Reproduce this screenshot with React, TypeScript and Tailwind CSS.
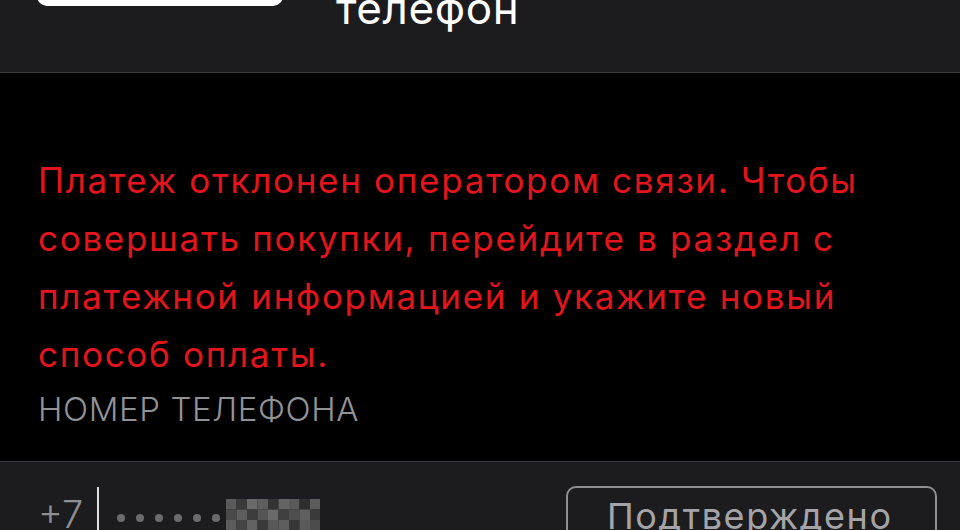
const mosaic = [
  ['#5a5a5a', '#3a3a3a', '#6a6a6a', '#5e5e5e', '#333333', '#646464', '#5a5a5a', '#2e2e2e', '#5c5c5c'],
  ['#4a4a4a', '#5e5e5e', '#3c3c3c', '#555555', '#6a6a6a', '#404040', '#4e4e4e', '#606060', '#3a3a3a'],
  ['#5c5c5c', '#444444', '#626262', '#3a3a3a', '#585858', '#5e5e5e', '#363636', '#5a5a5a', '#4c4c4c'],
];

const Mosaic = () => (
  <svg width="94" height="32" viewBox="0 0 94 32" className="block">
    {mosaic.map((row, r) =>
      row.map((c, i) => <rect key={`${r}-${i}`} x={i * 10.5} y={r * 10.5} width="10.5" height="10.5" fill={c} />)
    )}
  </svg>
);

export default function App() {
  return (
    <div className="w-[960px] h-[530px] overflow-hidden bg-black flex flex-col" style={{ fontFamily: 'Inter, "Liberation Sans", Arial, sans-serif' }}>
      {/* Top bar */}
      <div className="h-[73px] shrink-0 bg-[#1c1c1e] border-b border-[#3a3a3c] relative overflow-hidden">
        <div className="absolute left-[37px] top-[-40px] w-[246px] h-[46px] bg-white rounded-[10px]" />
        <div className="absolute left-[336px] top-[-17px] text-[44px] leading-[50px] tracking-[0.6px] text-white">телефон</div>
      </div>

      {/* Message */}
      <div className="h-[388px] shrink-0 bg-black px-[38px] pt-[78px]">
        <p className="text-[35px] leading-[58px] tracking-[1.7px] text-[#e3151c]">
          Платеж отклонен оператором связи. Чтобы совершать покупки, перейдите в раздел с платежной информацией и укажите новый способ оплаты.
        </p>
        <div className="mt-[6px] text-[33px] leading-[40px] tracking-[0.6px] text-[#929296] font-light">НОМЕР ТЕЛЕФОНА</div>
      </div>

      {/* Phone row */}
      <div className="flex-1 bg-[#1c1c1e] border-t border-[#3a3a3c] flex items-start pl-[38px] pr-[23px] pt-[24px]">
        <div className="text-[38px] leading-[40px] text-[#8e8e93] font-light mt-[8px] w-[59px]">+7</div>
        <div className="w-[2px] h-[60px] bg-[#e0e0e0] mt-[1px]" />
        <div className="flex items-center gap-[11px] ml-[18px] mt-[28px]">
          {[0, 1, 2, 3, 4, 5].map((i) => (
            <span key={i} className="w-[8px] h-[8px] rounded-full bg-[#6b6b6b]" />
          ))}
        </div>
        <div className="ml-[6px] mt-[13px]">
          <Mosaic />
        </div>
        <div className="ml-auto w-[371px] h-[60px] border-2 border-[#8e8e93] rounded-[10px] px-[39px] pt-[8px] text-[36px] leading-[40px] tracking-[1.6px] text-[#a4a4a8]">
          Подтверждено
        </div>
      </div>
    </div>
  );
}
